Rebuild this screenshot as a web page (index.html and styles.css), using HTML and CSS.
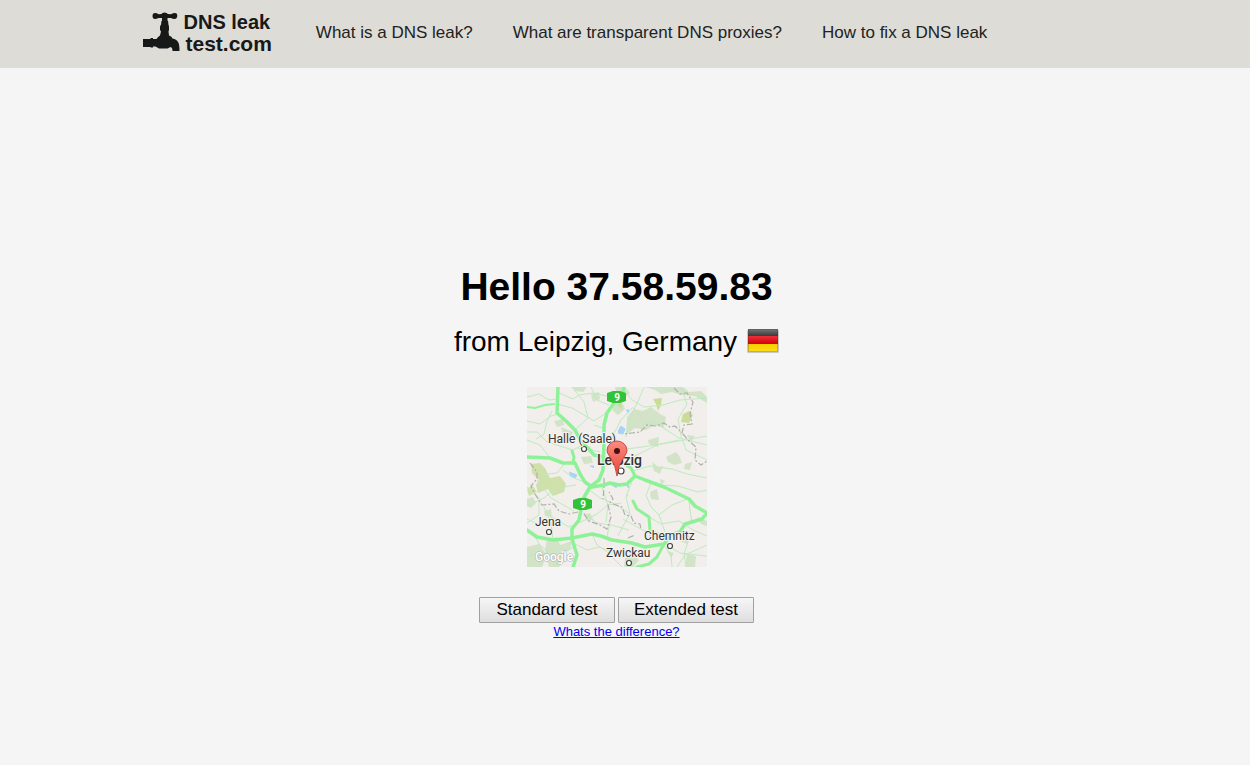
FILE: index.html
```html
<!DOCTYPE html>
<html lang="en">
<head>
    <meta charset="UTF-8">
    <meta name="viewport" content="width=device-width, initial-scale=1.0">
    <title>DNS leak test</title>
    <link rel="stylesheet" href="styles.css">
</head>
<body>
    <header class="header">
        <div class="container">
            <a class="logo" href="#">
                <svg class="tap" viewBox="0 0 37 40" aria-hidden="true">
                    <path d="M9.500 4Q9.500 1 12 1Q14 1 15.500 2.200L18.500 2Q19 .5 21.500.5Q24 .5 24.800 2L28 2.200Q30 1 32 1Q34.300 1 34.300 4Q34 7 31.500 7Q29.500 7 28 6L24.500 6V8.500L25.300 10V12L26 14.500V18L25.500 19.500L26 23.500Q29 24.500 29.500 26.500Q33.500 27 35 30Q36.500 32 36.500 39H29.500Q29.500 35.500 27.500 35L24.500 36.500H16L12.500 34.500L10 34.500V35.500H7.500V35H0V27H7.500V26H10V27L13.500 27Q14.500 25 17 23.500L18 19.500L17 18V14.500L18.200 12V10L19 8.500V6L15.500 6Q13.500 7 12 7Q9.500 7 9.500 4Z"/>
                </svg>
                <span class="logo-text">
                    <span class="logo-top">DNS leak</span>
                    <span class="logo-bottom">test.com</span>
                </span>
            </a>
            <nav class="nav">
                <a href="#">What is a DNS leak?</a>
                <a href="#">What are transparent DNS proxies?</a>
                <a href="#">How to fix a DNS leak</a>
            </nav>
        </div>
    </header>

    <main class="content">
        <h1>Hello 37.58.59.83</h1>
        <p class="location">
            from Leipzig, Germany
            <svg class="flag" viewBox="0 0 32 25" role="img" aria-label="Germany">
                <defs>
                    <linearGradient id="black" x2="0" y2="1"><stop stop-color="#777"/><stop offset="1" stop-color="#383838"/></linearGradient>
                    <linearGradient id="red" x2="0" y2="1"><stop stop-color="#ec2f38"/><stop offset="1" stop-color="#d30008"/></linearGradient>
                    <linearGradient id="gold" x2="0" y2="1"><stop stop-color="#f5cf00"/><stop offset="1" stop-color="#ffdd1c"/></linearGradient>
                </defs>
                <rect y="1" width="32" height="23" rx="1" fill="#c8c8c8"/>
                <rect x="1" width="30" height="7" fill="url(#black)"/>
                <rect x="1" y="7" width="30" height="8" fill="url(#red)"/>
                <rect x="1" y="15" width="30" height="8" fill="url(#gold)"/>
                <path d="M1.500 22.500V.5H30.500V22.500Z" fill="none" stroke="#333" stroke-opacity=".25"/>
            </svg>
        </p>

        <svg class="map" viewBox="0 0 180 180" role="img" aria-label="Map of Leipzig">
            <rect width="180" height="180" fill="#f1eeeb"/>
            <!-- woods -->
            <g fill="#d3e3c8">
                <path d="M45 0H60L56 5L48 4ZM64 7L72 5L73 12L66 15ZM27 34L36 32L37 38L30 40ZM34 40L46 45L44 51L36 48ZM100 30L107 22L116 24L124 20L133 27L139 30L137 41L128 38L119 43L108 41L99 48ZM85 17L95 15L98 22L91 28L86 24ZM88 0L98 0L103 6L96 12L90 8ZM118 0H156L162 5L174 4L180 10V16L168 9L155 8L145 5L134 7L128 3ZM121 53L132 50L131 60L122 57ZM139 70L149 65L153 70L155 76L147 78L141 75ZM160 48L168 49L164 55ZM158 77L165 75L163 83L157 82ZM125 75L131 80L136 79L133 87L127 84Z"/>
                <path d="M17 124L24 122L25 130L18 129ZM57 128L63 126L66 132L61 135ZM123 105L130 102L132 113L124 112ZM133 92L138 94L134 98ZM0 160L12 157L20 168L15 180H0ZM20 153L30 150L33 158L45 154L43 163L34 164L37 174L32 180H22L18 163ZM152 147L163 149L160 157L153 154ZM160 167L169 169L168 180H158ZM140 164L147 166L144 171ZM98 171L106 167L112 173L106 180H97ZM122 147L129 149L128 154L122 153ZM0 112L6 110L9 116L4 121L0 119ZM170 130L180 134V139L174 137ZM54 70L64 69L66 76L57 77Z"/>
            </g>
            <path d="M4 77L13 76L18 81L23 91L33 89L39 97L37 105L26 109L21 102L11 106L9 98L12 93L5 86ZM0 102L5 98L10 105L2 109Z" fill="#d0e0aa"/>
            <path d="M126 12L135 11L134 18L131 24L129 17ZM156 27L162 24L166 28L162 36L154 35ZM90 18L94 16L95 22Z" fill="#cadd96"/>
            <path d="M42 85L50 88L48 91L43 89M91 44L94 39L98 42L96 47L91 46M99 23L102 23L101 26M84 98L90 98L89 101M99 98L102 99L101 101M99 108L101 109M63 79L67 79L66 81" fill="#a9d3f6" stroke="#a9d3f6"/>

            <!-- minor roads -->
            <g fill="none" stroke="#bdebbf" stroke-width="1" stroke-linejoin="round">
                <path d="M30 5L46 12L52 8L66 6L84 10M30 17L45 21L57 28L67 34L82 24M48 43L61 31L57 15L45 0M0 45L10 45L20 55L33 59L46 63M9 52L17 47L20 34L25 24M23 71L13 58L0 53M46 63L57 57L73 52M38 76L30 86L14 88M50 61L61 62L73 65"/>
                <path d="M95 0L105 13L117 20L136 18L153 13L180 11M106 20L94 33L84 52L92 62M105 20L119 34L135 40L152 51L180 58M117 0L112 12L102 33L99 50M92 63L115 60L146 55L180 49M98 73L114 66L130 58L152 53M106 84L123 79L145 82L160 87L180 91M154 0L160 17L151 32L154 49L159 63L180 73M134 98L151 99L171 105L180 103"/>
                <path d="M0 119L17 111L29 101L49 98M10 93L24 111L47 124M36 83L45 90L64 98M0 132L13 138L25 130L42 140L56 134L70 127L81 118L94 116M5 145L13 158L27 170L30 180M26 153L24 135L17 120M61 102L73 111L88 117L103 127M57 126L70 136L84 138L102 143M65 147L70 158L79 164L95 180M46 156L60 163L72 160L88 166M0 170L17 166L34 168L46 160"/>
                <path d="M124 96L119 108L124 120L132 128L145 118L160 112M105 94L99 110L103 127L96 139L91 149M122 130L134 137L152 134L166 143L180 149M123 143L134 147L141 159L153 166L180 169M154 144L162 152L157 167L159 180M165 136L163 123L162 112M136 158L144 167L145 180M110 156L102 169L107 180M96 132L112 141L124 147M132 128L138 145"/>
                <path d="M0 10L12 7L22 13L31 12M0 34L13 37L24 29L31 27M64 0L70 13L82 18M67 38L78 42M75 100L81 118L79 135M0 100L12 111L12 128L0 136M80 150L83 135M150 180L158 168L180 158"/>
            </g>
            <path d="M0 20L8 21L18 18L28 17" fill="none" stroke="#90f49c" stroke-width="2"/>

            <!-- state border -->
            <g fill="none" stroke="#b2b0af" stroke-width="1.200" stroke-dasharray="6 2 2 2">
                <path d="M147 1L153 7L160 6L166 15L163 27L165 37L157 38L155 46L148 39L143 40L137 36L129 39L120 38L113 45L105 46L97 47M156 47L162 54L169 60L168 73L174 78L180 74"/>
                <path d="M3 76L10 85L10 92L4 99L8 107L15 118L27 117L32 124L42 127L51 125L57 127L62 134L73 138L80 142L84 130L81 118L86 112L82 105M77 91L77 100L76 112M86 117L95 120L98 128L104 129L107 136L113 137L114 143M101 151L108 148"/>
            </g>

            <!-- motorways -->
            <g fill="none" stroke="#8df297" stroke-linejoin="round" stroke-linecap="round">
                <path stroke-width="3.500" d="M31 0L30 26L39 34L48 43L55 56L61 61L67 68L76 70M97 0L95 8L87 16L80 26L77 38L77 56L76 83L72 93L63 100L56 112L52 133L45 142L45 152L50 168L46 180"/>
                <path stroke-width="3.500" d="M0 70L23 71L36 76L48 76L53 87L58 95L65 100L77 98L83 96L92 98L100 97L108 89L118 93L137 100L162 112L168 119L180 126L175 132L158 137L153 145L144 148L137 157L118 160L105 156L85 153L74 149L65 147L45 151L26 153L10 150L0 143"/>
                <path stroke-width="3" d="M45 64L47 70L46 76M108 89L104 81L99 78M106 114L110 122L122 130L123 144M137 157L130 170L122 177L110 180"/>
            </g>

            <!-- road numbers -->
            <g class="shield">
                <path d="M80 6L86 4H93L99 6V14L93 16H86L80 14ZM46 113L52 111H59L65 113V121L59 123H52L46 121Z"/>
                <text x="90" y="14">9</text>
                <text x="56" y="121">9</text>
            </g>

            <!-- towns -->
            <g fill="#fff" stroke="#444" stroke-width="1.200">
                <circle cx="57" cy="62" r="2.500"/>
                <circle cx="94" cy="84" r="3"/>
                <circle cx="22" cy="145" r="2.500"/>
                <circle cx="143" cy="159" r="2.500"/>
                <circle cx="102" cy="176" r="2.500"/>
            </g>
            <g class="town">
                <text x="21" y="56">Halle (Saale)</text>
                <text x="8" y="139">Jena</text>
                <text x="117" y="153">Chemnitz</text>
                <text x="79" y="170">Zwickau</text>
                <text class="city" x="70" y="78">Leipzig</text>
            </g>
            <text class="google" x="8" y="174">Google</text>

            <!-- pin -->
            <defs>
                <linearGradient id="pin" x2="0" y2="1"><stop stop-color="#fb8b80"/><stop offset="1" stop-color="#e8453c"/></linearGradient>
            </defs>
            <path d="M90 89Q89 79 83 70Q80 66 80 63.500A10 9.500 0 0 1 100 63.500Q100 66 97 70Q91 79 90 89Z" fill="url(#pin)" stroke="#b8352e" stroke-width=".8"/>
            <circle cx="90" cy="64" r="3" fill="#48100e"/>
        </svg>

        <form class="tests">
            <button type="button">Standard test</button>
            <button type="button">Extended test</button>
        </form>
        <a class="difference" href="#">Whats the difference?</a>
    </main>
</body>
</html>
```
FILE: styles.css
```css
body {
    margin: 0;
    font-family: Arial, "Liberation Sans", sans-serif;
    font-size: 17px;
    color: #000;
    background-color: #f5f5f5;
}
.header {
    padding-right: 17px;
    background-color: #dddcd7;
}
.container {
    display: flex;
    align-items: flex-start;
    gap: 44px;
    max-width: 948px;
    margin: 0 auto;
    padding: 12px 0 14px;
}
.logo {
    display: flex;
    gap: 4px;
    color: #171918;
    text-decoration: none;
}
.tap {
    width: 37px;
    height: 40px;
    fill: #171918;
}
.logo-text {
    display: flex;
    flex-direction: column;
    font-size: 20px;
    font-weight: bold;
    line-height: 21px;
}
.logo-bottom {
    padding-left: 2px;
    font-size: 21px;
}
.nav {
    display: flex;
    gap: 40px;
    line-height: 42px;
}
.nav a {
    color: #222;
    text-decoration: none;
}
.content {
    display: flex;
    flex-direction: column;
    align-items: center;
    padding: 196px 17px 40px 0;
}
h1 {
    margin: 0;
    font-size: 39px;
    line-height: 46px;
}
.location {
    display: flex;
    align-items: center;
    gap: 10px;
    margin: 14px 0 28px;
    font-size: 28px;
    line-height: 35px;
}
.flag {
    width: 32px;
    height: 25px;
}
.map {
    width: 180px;
    height: 180px;
}
.shield {
    fill: #32c23a;
}
.shield text {
    font: bold 10px Roboto, sans-serif;
    text-anchor: middle;
    fill: #fff;
}
.town {
    font: 12px Roboto, sans-serif;
    fill: #333;
    stroke: #f5f3f0;
    stroke-width: 2px;
    paint-order: stroke;
}
.city {
    font-size: 14px;
    font-weight: 500;
}
.google {
    font: 500 12px Roboto, sans-serif;
    fill: #fff;
    stroke: #aaa;
    stroke-width: 1px;
    paint-order: stroke;
}
.tests {
    display: flex;
    gap: 3px;
    margin-top: 30px;
}
button {
    width: 136px;
    height: 26px;
    padding: 0;
    border: 1px solid #a0a0a0;
    border-radius: 1px;
    font-family: inherit;
    font-size: 17px;
    color: #000;
    background: linear-gradient(#f6f6f6, #dedede);
}
.difference {
    font-size: 13px;
    line-height: 18px;
    color: #00e;
}
```
